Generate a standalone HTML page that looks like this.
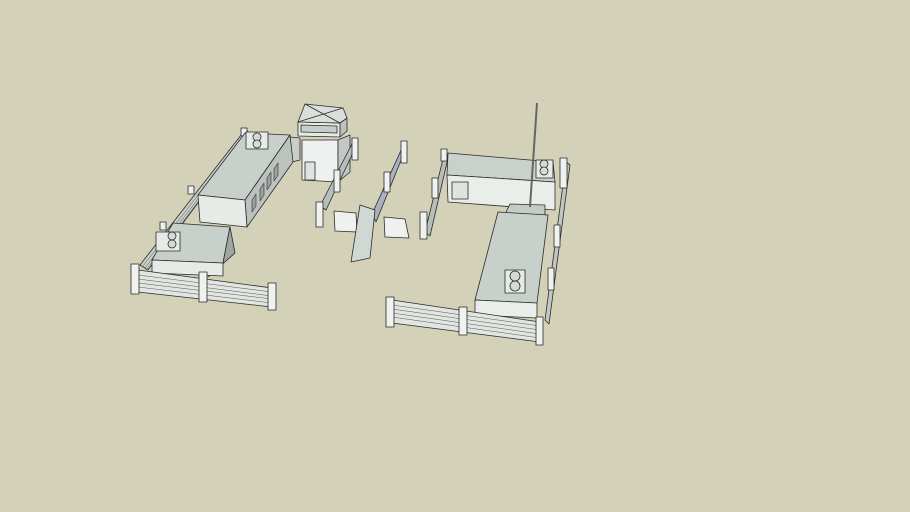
<!DOCTYPE html>
<html><head><meta charset="utf-8"><style>
html,body{margin:0;padding:0;background:#d4d1b9;width:910px;height:512px;overflow:hidden}
svg{display:block}
</style></head><body>
<svg width="910" height="512" viewBox="0 0 910 512" xmlns="http://www.w3.org/2000/svg" stroke="#2a2a2a" stroke-width="0.8" stroke-linejoin="round">
<!-- left back diagonal fence -->
<polygon points="140,265 245,130 250,133 148,270" fill="#c9cfc8"/>
<g stroke="#555" stroke-width="0.5"><line x1="143" y1="266" x2="247" y2="132"/><line x1="145" y1="268" x2="248" y2="134"/><line x1="147" y1="269" x2="249" y2="135"/></g>
<rect x="188" y="186" width="6" height="8" fill="#eef0ee"/>
<rect x="160" y="222" width="6" height="8" fill="#eef0ee"/>
<rect x="241" y="128" width="6" height="8" fill="#eef0ee"/>
<!-- fence between building and tower -->
<polygon points="290,137 300,138 300,160 292,162" fill="#c9cfc8"/>
<!-- long building -->
<polygon points="245,133 290,135 245,200 198,195" fill="#c7d0ca"/>
<polygon points="245,200 290,135 293,162 247,227" fill="#bcc3bf"/>
<polygon points="198,195 245,200 247,227 200,222" fill="#e6ebe8"/>
<g fill="#9aa39f" stroke="#333" stroke-width="0.6">
<polygon points="252,200 256,194 256,206 252,212"/><polygon points="260,189 264,183 264,195 260,201"/><polygon points="267,178 271,172 271,184 267,190"/><polygon points="274,169 278,163 278,175 274,181"/>
</g>
<rect x="246" y="132" width="22" height="17" fill="#e6ebe8"/>
<circle cx="257" cy="137" r="4" fill="#d5dbd7"/><circle cx="257" cy="144" r="4" fill="#d5dbd7"/>
<!-- small building -->
<polygon points="173,223 230,227 223,263 152,260" fill="#c7d0ca"/>
<polygon points="230,227 235,253 208,277 223,263" fill="#9fa7a3"/>
<polygon points="152,260 223,263 223,276 152,273" fill="#e6ebe8"/>
<rect x="156" y="232" width="24" height="19" fill="#e6ebe8"/>
<circle cx="172" cy="236" r="4" fill="#d5dbd7"/><circle cx="172" cy="244" r="4" fill="#d5dbd7"/>
<!-- left front fence -->
<polygon points="138,270 272,288 272,307 138,292" fill="#e2e6e3"/>
<g stroke="#555" stroke-width="0.5"><line x1="138" y1="275" x2="272" y2="292"/><line x1="138" y1="279" x2="272" y2="296"/><line x1="138" y1="283" x2="272" y2="299"/><line x1="138" y1="287" x2="272" y2="303"/></g>
<rect x="131" y="264" width="8" height="30" fill="#f0f2f0"/>
<rect x="199" y="272" width="8" height="30" fill="#f0f2f0"/>
<rect x="268" y="283" width="8" height="27" fill="#f0f2f0"/>
<!-- tower -->
<polygon points="302,140 338,140 338,182 302,180" fill="#eef1ef"/>
<polygon points="338,140 350,135 350,172 338,182" fill="#c2c9c5"/>
<rect x="305" y="162" width="10" height="18" fill="#dfe4e1"/>
<polygon points="298,122 340,123 340,137 298,136" fill="#e6ebe8"/>
<polygon points="301,125 337,126 337,133 301,132" fill="#c7ceca"/>
<polygon points="340,123 347,118 347,131 340,137" fill="#bcc3bf"/>
<polygon points="305,104 343,108 347,118 340,123 298,122" fill="#d9e0dc"/>
<line x1="305" y1="104" x2="340" y2="123"/><line x1="343" y1="108" x2="298" y2="122"/>
<!-- tower fence -->
<polygon points="320,206 354,140 358,142 326,210" fill="#b8bfbb"/>
<rect x="316" y="202" width="7" height="25" fill="#f0f2f0"/>
<rect x="334" y="170" width="6" height="22" fill="#f0f2f0"/>
<rect x="352" y="138" width="6" height="22" fill="#f0f2f0"/>
<!-- center wall -->
<polygon points="372,214 403,146 406,148 376,222" fill="#aab0c0"/>
<rect x="384" y="172" width="6" height="20" fill="#f0f2f0"/>
<rect x="401" y="141" width="6" height="22" fill="#f0f2f0"/>
<polygon points="334,211 356,213 357,232 335,231" fill="#eef1ef"/>
<polygon points="384,217 405,219 409,238 385,237" fill="#eef1ef"/>
<polygon points="360,205 375,210 370,258 351,262" fill="#cfd8d2"/>
<!-- right side fence left -->
<polygon points="425,232 444,155 448,158 430,236" fill="#b8bfbb"/>
<rect x="420" y="212" width="7" height="27" fill="#f0f2f0"/>
<rect x="432" y="178" width="6" height="20" fill="#f0f2f0"/>
<rect x="441" y="149" width="6" height="12" fill="#f0f2f0"/>
<!-- right building -->
<polygon points="448,153 553,162 555,182 447,175" fill="#c9d1cc"/>
<polygon points="447,175 555,182 555,210 448,202" fill="#eaeeeb"/>
<rect x="452" y="182" width="16" height="17" fill="#dfe4e1"/>
<rect x="536" y="160" width="17" height="18" fill="#e6ebe8"/>
<circle cx="544" cy="164" r="4" fill="#d5dbd7"/><circle cx="544" cy="171" r="4" fill="#d5dbd7"/>
<!-- right back fence -->
<polygon points="545,320 566,162 570,165 549,324" fill="#c0c6c2"/>
<rect x="560" y="158" width="7" height="30" fill="#f0f2f0"/>
<rect x="554" y="225" width="6" height="22" fill="#f0f2f0"/>
<rect x="548" y="268" width="6" height="22" fill="#f0f2f0"/>
<!-- long right building -->
<polygon points="510,204 545,205 545,215 505,214" fill="#c4ccc7"/>
<polygon points="498,212 548,215 537,303 475,300" fill="#c7d0ca"/>
<polygon points="475,300 537,303 537,318 475,315" fill="#eaeeeb"/>
<rect x="505" y="270" width="20" height="23" fill="#e6ebe8"/>
<circle cx="515" cy="276" r="5" fill="#d5dbd7"/><circle cx="515" cy="286" r="5" fill="#d5dbd7"/>
<line x1="537" y1="103" x2="530" y2="207" stroke="#666" stroke-width="2"/>
<!-- right front fence -->
<polygon points="392,300 540,322 540,342 392,323" fill="#e2e6e3"/>
<g stroke="#555" stroke-width="0.5"><line x1="392" y1="305" x2="540" y2="326"/><line x1="392" y1="309" x2="540" y2="330"/><line x1="392" y1="313" x2="540" y2="334"/><line x1="392" y1="317" x2="540" y2="338"/></g>
<rect x="386" y="297" width="8" height="30" fill="#f0f2f0"/>
<rect x="459" y="307" width="8" height="28" fill="#f0f2f0"/>
<rect x="536" y="317" width="7" height="28" fill="#f0f2f0"/>
</svg>
</body></html>
